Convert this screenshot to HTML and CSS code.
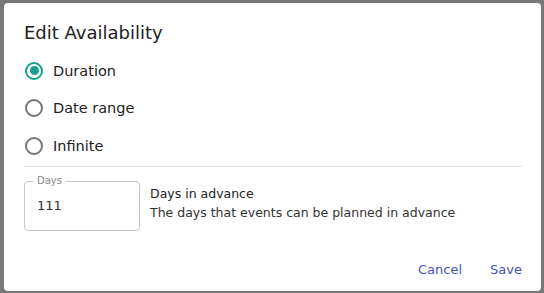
FILE: index.html
```html
<!DOCTYPE html>
<html lang="en">
<head>
    <meta charset="UTF-8">
    <meta name="viewport" content="width=device-width, initial-scale=1.0">
    <title>Edit Availability</title>
    <link rel="stylesheet" href="styles.css">
</head>
<body>
    <div class="backdrop">
        <div class="dialog">
            <h2 class="dialog-title">Edit Availability</h2>

            <div class="radio-group">
                <label class="radio-row">
                    <span class="radio checked"><span class="dot"></span></span>
                    <span class="radio-label">Duration</span>
                </label>
                <label class="radio-row">
                    <span class="radio"></span>
                    <span class="radio-label">Date range</span>
                </label>
                <label class="radio-row">
                    <span class="radio"></span>
                    <span class="radio-label">Infinite</span>
                </label>
            </div>

            <hr class="divider">

            <div class="field-row">
                <div class="outlined-field">
                    <span class="field-label">Days</span>
                    <span class="field-value">111</span>
                </div>
                <div class="field-help">
                    <div class="help-title">Days in advance</div>
                    <div class="help-text">The days that events can be planned in advance</div>
                </div>
            </div>

            <div class="actions">
                <button class="btn">Cancel</button>
                <button class="btn">Save</button>
            </div>
        </div>
    </div>
</body>
</html>
```

FILE: styles.css
```css
body {
    margin: 0;
    font-family: 'DejaVu Sans', 'Noto Sans', sans-serif;
    background-color: #787878;
    color: #222;
}
.backdrop {
    width: 544px;
    height: 293px;
    padding: 3px 3px 2px 4px;
    box-sizing: border-box;
}
.dialog {
    background-color: white;
    border-radius: 4px;
    height: 100%;
    box-sizing: border-box;
    padding: 18px 19px 0 20px;
    display: flex;
    flex-direction: column;
}
.dialog-title {
    margin: 0;
    font-size: 18px;
    font-weight: 400;
    line-height: 24px;
    color: #222;
}
.radio-group {
    margin-top: 7px;
    display: flex;
    flex-direction: column;
}
.radio-row {
    display: flex;
    align-items: center;
    height: 37.5px;
    gap: 10px;
}
.radio {
    width: 14px;
    height: 14px;
    margin-left: 1px;
    border: 2px solid #757575;
    border-radius: 50%;
    display: flex;
    align-items: center;
    justify-content: center;
}
.radio.checked {
    border-color: #16a08c;
}
.dot {
    width: 9px;
    height: 9px;
    border-radius: 50%;
    background-color: #16a08c;
}
.radio-label {
    font-size: 14.5px;
    color: #222;
}
.divider {
    border: none;
    border-top: 1px solid #e0e0e0;
    margin: 1px 0 0 0;
}
.field-row {
    display: flex;
    align-items: flex-start;
    margin-top: 14px;
    gap: 10px;
}
.outlined-field {
    position: relative;
    width: 116px;
    height: 50px;
    border: 1px solid #c8c8c8;
    border-radius: 4px;
    box-sizing: border-box;
    display: flex;
    align-items: center;
    padding: 0 12px;
}
.field-label {
    position: absolute;
    top: -7px;
    left: 8px;
    padding: 0 4px;
    background-color: white;
    font-size: 10px;
    line-height: 12px;
    color: #8a8a8a;
}
.field-value {
    font-size: 13px;
    color: #333;
}
.field-help {
    padding-top: 4px;
}
.help-title {
    font-size: 12.5px;
    font-weight: 500;
    line-height: 18px;
    color: #222;
}
.help-text {
    font-size: 12.5px;
    line-height: 20px;
    color: #333;
}
.actions {
    margin-top: auto;
    display: flex;
    justify-content: flex-end;
    gap: 20px;
    padding-bottom: 8px;
}
.btn {
    font-family: inherit;
    font-size: 13px;
    color: #4453c0;
    background: none;
    border: none;
    padding: 6px 0 6px 8px;
    cursor: pointer;
}
```
